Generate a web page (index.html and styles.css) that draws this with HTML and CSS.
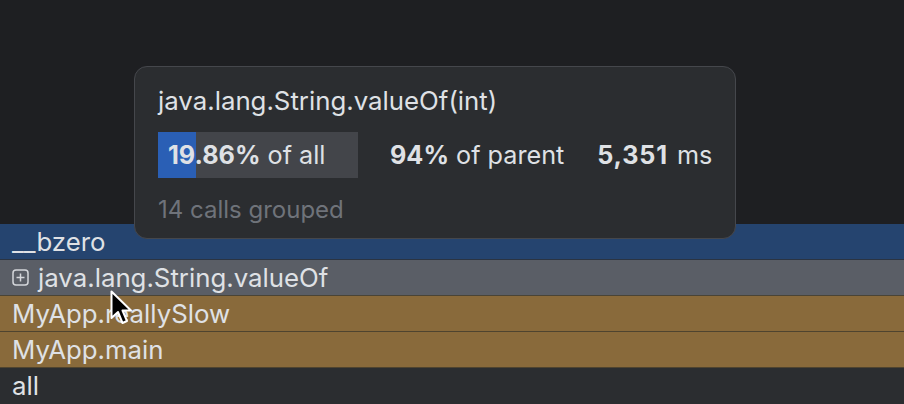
FILE: index.html
```html
<!DOCTYPE html>
<html>
<head>
<meta charset="utf-8">
<link rel="stylesheet" href="styles.css">
</head>
<body>
<div class="stage">
  <div class="top"></div>
  <div class="rows">
    <div class="row blue"><span class="label">__bzero</span></div>
    <div class="row gray"><span class="plus"><svg width="17" height="17" viewBox="0 0 17 17"><rect x="1" y="1" width="15" height="15" rx="3" fill="none" stroke="#d4d6da" stroke-width="1.5"/><path d="M8.5 4.5v8M4.5 8.5h8" stroke="#d4d6da" stroke-width="1.5"/></svg></span><span class="label">java.lang.String.valueOf</span></div>
    <div class="row brown"><span class="label">MyApp.reallySlow</span></div>
    <div class="row brown"><span class="label">MyApp.main</span></div>
    <div class="row base"><span class="label">all</span></div>
  </div>
  <div class="tooltip">
    <div class="title">java.lang.String.valueOf(int)</div>
    <div class="stats">
      <div class="bar">
        <div class="fill" style="width:19%"></div>
        <span class="bar-text"><b>19.86%</b> of all</span>
      </div>
      <div class="stat"><b>94%</b> of parent</div>
      <div class="stat"><b class="num">5,351</b> ms</div>
    </div>
    <div class="note">14 calls grouped</div>
  </div>
  <svg class="cursor" width="26" height="38" viewBox="0 0 26 38"><path d="M1.5 1.5 L1.5 28 L8 22 L12.5 33 L17 31 L12.5 20.5 L21 20.5 Z" fill="#000" stroke="#fff" stroke-width="2" stroke-linejoin="round"/></svg>
</div>
</body>
</html>
```
FILE: styles.css
```css
* { box-sizing: border-box; }
html, body { margin: 0; padding: 0; }
body {
  background: #1e1f22;
  font-family: Inter, "Noto Sans", sans-serif;
  color: #dfe1e5;
  width: 904px;
  height: 404px;
  overflow: hidden;
}
.stage { position: relative; width: 904px; height: 404px; display: flex; flex-direction: column; }
.top { height: 224px; background: #1e1f22; flex: none; }
.rows { display: flex; flex-direction: column; flex: 1; }
.row {
  height: 36px;
  display: flex;
  align-items: center;
  padding-left: 12px;
  font-size: 25.8px;
  color: #dfe1e5;
  border-bottom: 1px solid #3a3526;
  white-space: nowrap;
}
.row.blue { background: #25446f; border-bottom-color: #2b3442; }
.row.gray { background: #5a5e66; border-bottom-color: #4a4436; }
.row.brown { background: #896a3b; border-bottom-color: #4f442f; }
.row.base { background: #2b2d30; border-bottom: none; flex: 1; }
.plus { display: flex; width: 17px; height: 17px; margin-right: 9px; margin-left: 0; }
.label { line-height: 1; }
.tooltip {
  position: absolute;
  left: 134px;
  top: 66px;
  width: 602px;
  height: 173px;
  background: #2b2d30;
  border: 1px solid #45474c;
  border-radius: 13px;
  padding: 19px 23px 0 23px;
  display: flex;
  flex-direction: column;
}
.title { font-size: 25.8px; line-height: 30px; color: #dfe1e5; white-space: nowrap; }
.stats { display: flex; align-items: center; margin-top: 16px; height: 46px; font-size: 25.2px; white-space: nowrap; }
.bar { position: relative; width: 200px; height: 46px; background: #43454a; display: flex; align-items: center; flex: none; }
.fill { position: absolute; left: 0; top: 0; bottom: 0; background: #2a5fb5; }
.bar-text { position: relative; padding-left: 10px; }
.stat { margin-left: 32px; }
.stat + .stat { margin-left: 33px; }
b { font-weight: 700; }
.num { letter-spacing: 0.8px; margin-right: 2px; }
.note { margin-top: 17px; font-size: 24px; line-height: 30px; color: #6f737a; white-space: nowrap; }
.cursor { position: absolute; left: 110px; top: 290px; }
```
